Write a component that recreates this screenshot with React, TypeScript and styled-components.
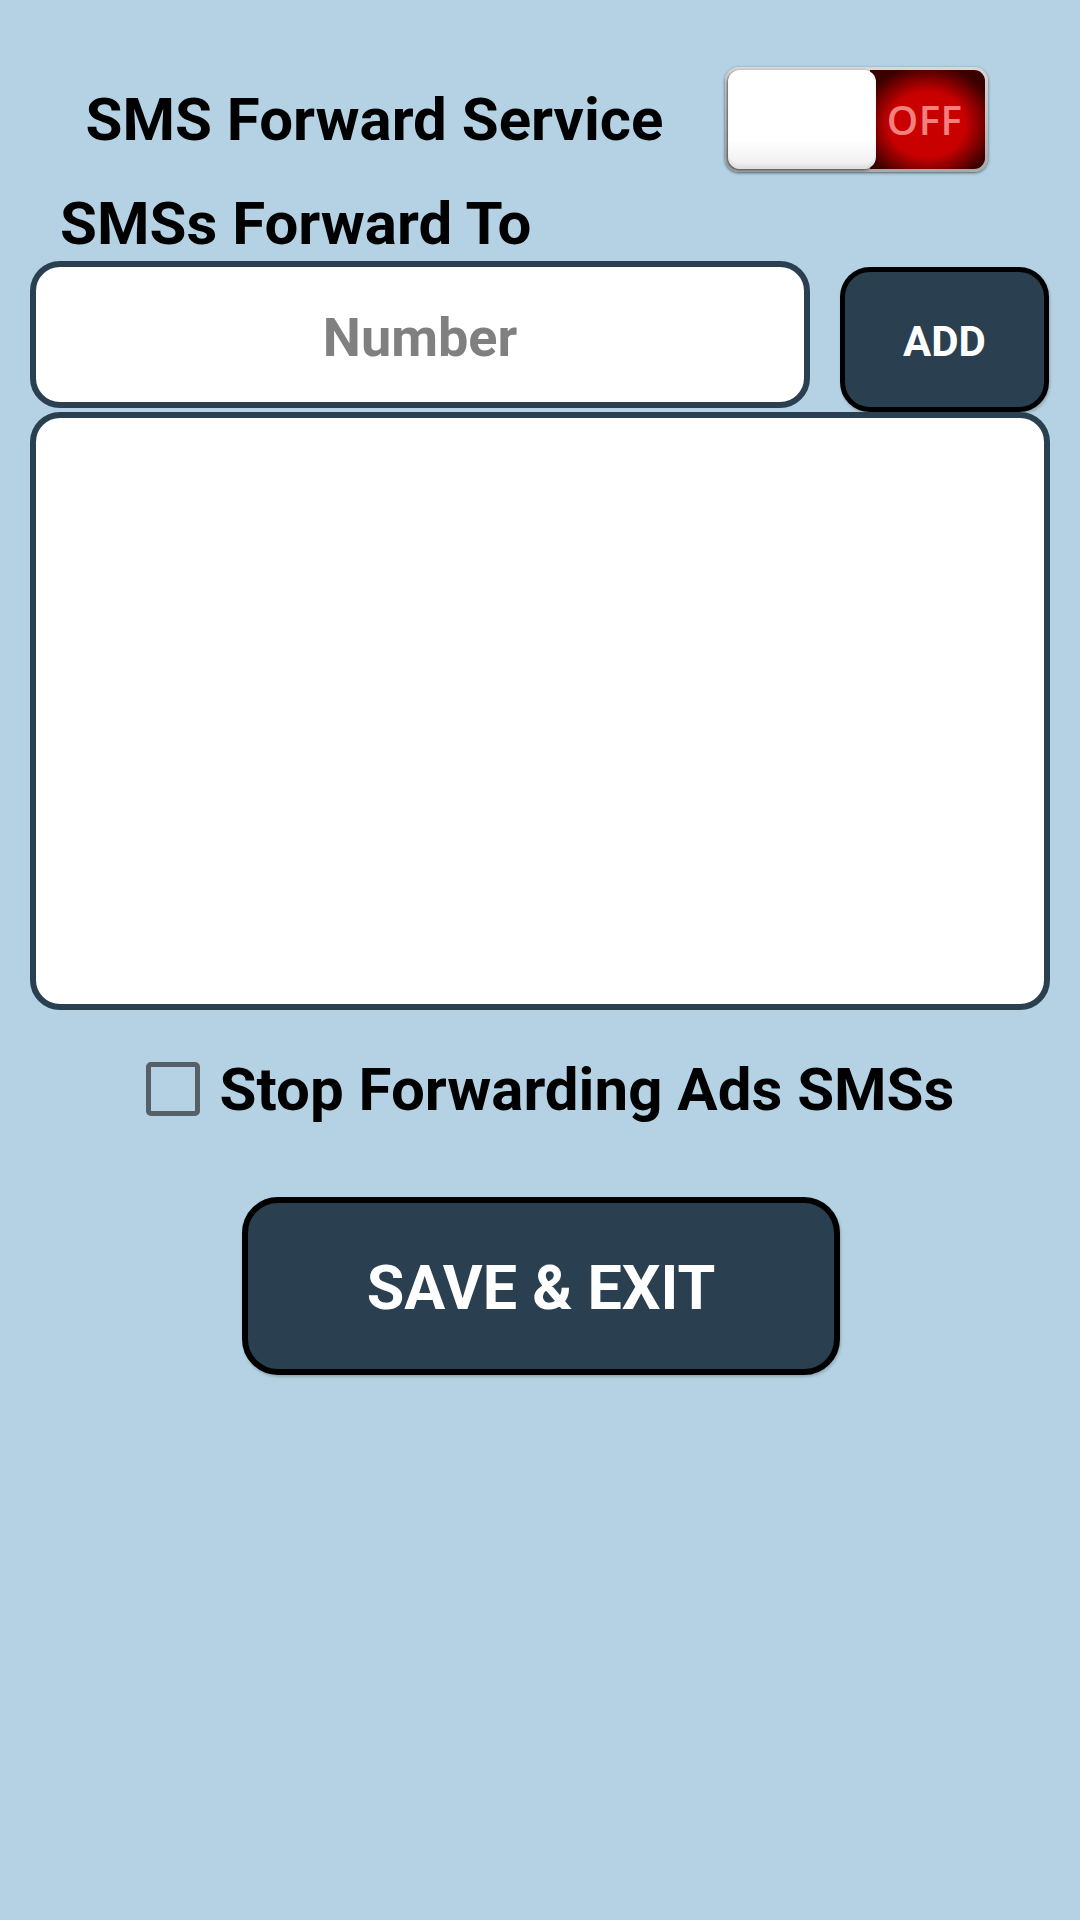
import styled, { createGlobalStyle } from 'styled-components'

const GlobalStyle = createGlobalStyle`
  html, body {
    margin: 0;
    padding: 0;
    background: #b4d2e3;
  }

  body {
    font-family: Roboto, 'Liberation Sans', sans-serif;
  }
`

const Screen = styled.main`
  width: 1080px;
  min-height: 1920px;
  box-sizing: border-box;
  padding: 67px 30px 0;
  background: #b4d2e3;
  display: flex;
  flex-direction: column;
`

const HeaderRow = styled.header`
  display: flex;
  align-items: center;
  height: 105px;
`

const Title = styled.h1`
  flex: 1;
  margin: 0 0 0 -6px;
  text-align: center;
  font-size: 60px;
  font-weight: 700;
  line-height: 1;
  color: #000;
`

const Switch = styled.div`
  display: flex;
  width: 263px;
  height: 105px;
  margin-right: 62px;
  box-sizing: border-box;
  padding: 3px;
  border-radius: 14px;
  background: linear-gradient(#d8d8d8, #a9a9a9);
  box-shadow: 0 1px 3px rgba(0, 0, 0, 0.55);
`

const Knob = styled.div`
  width: 148px;
  border-radius: 12px;
  background: linear-gradient(#ffffff 0%, #ffffff 70%, #ededed 100%);
  box-shadow:
    -1px 1px 3px rgba(0, 0, 0, 0.6),
    inset 0 -4px 3px rgba(0, 0, 0, 0.06);
  position: relative;
  z-index: 1;
`

const Track = styled.div<{ $on?: boolean }>`
  flex: 1;
  margin-left: -6px;
  padding: 0 6px 0 0;
  border-radius: 0 11px 11px 0;
  display: flex;
  align-items: center;
  justify-content: center;
  background: ${(p) =>
    p.$on
      ? 'radial-gradient(ellipse at center, #2fbf3f 45%, #0a4010 100%)'
      : 'radial-gradient(ellipse 60% 60% at 50% 55%, #c80000 55%, #3a0000 100%)'};
  color: #f47f7f;
  font-family: 'Open Sans', 'Liberation Sans', sans-serif;
  font-size: 40px;
  font-weight: 600;
  letter-spacing: 0.5px;
`

const Label = styled.h2`
  margin: 22px 0 0;
  padding-left: 30px;
  font-size: 60px;
  font-weight: 700;
  line-height: 1;
  color: #000;
`

const InputRow = styled.div`
  display: flex;
  align-items: flex-start;
  gap: 30px;
  margin-top: 7px;
`

const NumberInput = styled.input`
  width: 780px;
  height: 147px;
  box-sizing: border-box;
  padding: 6px 0 0;
  border: 6px solid #2a4050;
  border-radius: 30px;
  background: #fff;
  outline: none;
  text-align: center;
  font-family: inherit;
  font-size: 54px;
  font-weight: 700;
  color: #000;

  &::placeholder {
    color: #808080;
  }
`

const DarkButton = styled.button<{ $size?: 'small' | 'large' }>`
  box-sizing: border-box;
  padding: 4px 0 0;
  border: ${(p) => (p.$size === 'large' ? 6 : 5)}px solid #000;
  border-radius: ${(p) => (p.$size === 'large' ? 36 : 30)}px;
  background: #2a4050;
  color: #fff;
  font-family: inherit;
  font-weight: 700;
  font-size: ${(p) => (p.$size === 'large' ? 61 : 42)}px;
  box-shadow: 1px 2px 3px rgba(0, 0, 0, 0.2);
  cursor: pointer;
`

const AddButton = styled(DarkButton)`
  width: 209px;
  height: 145px;
  margin-top: 6px;
`

const NumberList = styled.div`
  height: 598px;
  box-sizing: border-box;
  border: 6px solid #2a4050;
  border-radius: 30px;
  background: #fff;
`

const CheckRow = styled.label`
  display: flex;
  align-items: center;
  justify-content: center;
  gap: 20px;
  margin-top: 52px;
  padding-left: 20px;
  height: 54px;
  font-size: 60px;
  font-weight: 700;
  color: #000;
`

const CheckBox = styled.input`
  appearance: none;
  width: 54px;
  height: 54px;
  margin: 0;
  box-sizing: border-box;
  border: 5px solid #556069;
  border-radius: 5px;
  background: transparent;
`

const SaveButton = styled(DarkButton)`
  align-self: center;
  width: 598px;
  height: 178px;
  margin: 81px 0 0 2px;
`

export default function App() {
  return (
    <>
      <GlobalStyle />
      <Screen>
        <HeaderRow>
          <Title>SMS Forward Service</Title>
          <Switch>
            <Knob />
            <Track>OFF</Track>
          </Switch>
        </HeaderRow>
        <Label>SMSs Forward To</Label>
        <InputRow>
          <NumberInput type="tel" placeholder="Number" />
          <AddButton>ADD</AddButton>
        </InputRow>
        <NumberList />
        <CheckRow>
          <CheckBox type="checkbox" />
          Stop Forwarding Ads SMSs
        </CheckRow>
        <SaveButton $size="large">SAVE &amp; EXIT</SaveButton>
      </Screen>
    </>
  )
}
